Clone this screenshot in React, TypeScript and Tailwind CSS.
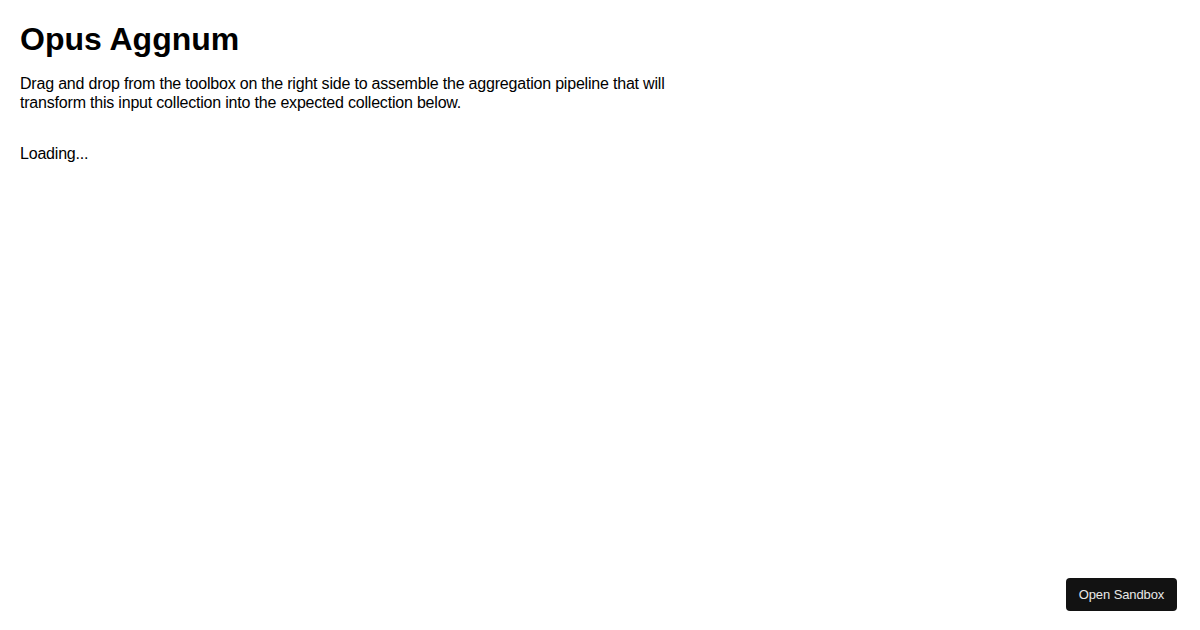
export default function App() {
  return (
    <div className="relative h-[630px] w-[1200px] bg-white px-5 pt-4 text-black [font-family:'Liberation_Sans',Arial,sans-serif]">
      <h1 className="text-[32px] font-bold leading-[46px]">Opus Aggnum</h1>
      <p className="mt-3 max-w-[680px] text-base leading-[19px] tracking-[-0.2px]">
        Drag and drop from the toolbox on the right side to assemble the aggregation pipeline that will transform this
        input collection into the expected collection below.
      </p>
      <div className="mt-[32px] text-base leading-[19px] tracking-[-0.2px]">Loading...</div>

      <button className="absolute bottom-[19px] right-[23px] h-[33px] w-[111px] rounded-[4px] bg-[#121212] text-[13px] tracking-[-0.1px] text-[#e8e8e8]">
        Open Sandbox
      </button>
    </div>
  )
}
